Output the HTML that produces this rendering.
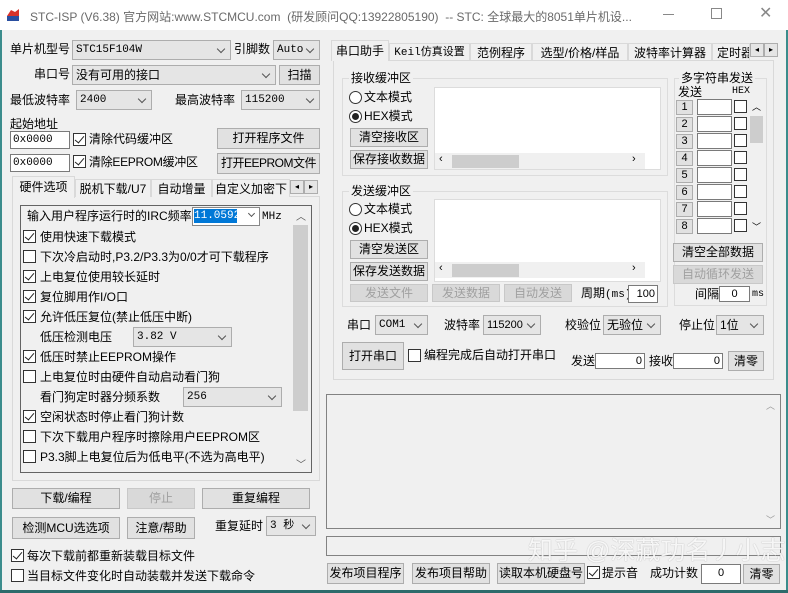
<!DOCTYPE html>
<html><head><meta charset="utf-8"><style>
*{box-sizing:border-box;margin:0;padding:0}
body{width:788px;height:593px;overflow:hidden;background:#f0f0f0;position:relative;font-family:"Liberation Sans","Noto Sans CJK SC",sans-serif;font-size:12px;color:#000}
.a{position:absolute;white-space:nowrap}
.t{position:absolute;white-space:nowrap;line-height:16px;font-size:12px}
.m{font-family:"Liberation Mono","Noto Sans CJK SC",monospace;font-size:11px}
.sel{position:absolute;background:#e5e5e5;border:1px solid #adadad;height:20px;line-height:18px;padding-left:3px;font-size:11px;font-family:"Liberation Mono","Noto Sans CJK SC",monospace}
.sel:after{content:"";position:absolute;right:6px;top:5px;width:5px;height:5px;border-right:1px solid #555;border-bottom:1px solid #555;transform:rotate(45deg)}
.btn{position:absolute;background:#e1e1e1;border:1px solid #adadad;text-align:center;font-size:12px;line-height:18px;white-space:nowrap}
.dis{color:#a0a0a0;background:#d9d9d9;border-color:#c8c8c8}
.inp{position:absolute;background:#fff;border:1px solid #7a7a7a;height:18px;line-height:16px;font-size:11px;padding:0 2px;font-family:"Liberation Mono",monospace}
.cb{position:absolute;width:13px;height:13px;border:1px solid #333;background:#fff}
.cb.on:after{content:"";position:absolute;left:3px;top:0px;width:4px;height:8px;border-right:1.5px solid #222;border-bottom:1.5px solid #222;transform:rotate(40deg)}
.rd{position:absolute;width:13px;height:13px;border:1px solid #333;border-radius:50%;background:#fff}
.rd.on:after{content:"";position:absolute;left:2px;top:2px;width:7px;height:7px;border-radius:50%;background:#222}
.grp{position:absolute;border:1px solid #dcdcdc}
.gt{position:absolute;background:#f0f0f0;padding:0 2px;top:-9px;left:6px;font-size:12px;line-height:16px}
.tab{position:absolute;border:1px solid #d9d9d9;border-bottom:none;background:#f0f0f0;text-align:center;font-size:12px;line-height:18px;white-space:nowrap;overflow:hidden}
.arr{position:absolute;width:14px;height:14px;background:#e5e5e5;border:1px solid #adadad;font-size:8px;line-height:12px;text-align:center}
</style></head><body>
<div class="a" style="left:0;top:0;width:788px;height:30px;background:#fff"></div>
<svg class="a" style="left:5px;top:7px" width="16" height="16"><rect x="2" y="9" width="12" height="5" fill="#2a4fa0"/><path d="M2 9 L6 3 L10 5 L14 2 L14 9Z" fill="#d8322a"/></svg>
<div class="a" style="left:30px;top:8px;font-size:12px;color:#6a6a6a">STC-ISP (V6.38) 官方网站:www.STCMCU.com &nbsp;(研发顾问QQ:13922805190) &nbsp;-- STC: 全球最大的8051单片机设...</div>
<div class="a" style="left:663px;top:14px;width:11px;height:1px;background:#888"></div>
<div class="a" style="left:711px;top:8px;width:11px;height:11px;border:1px solid #888"></div>
<div class="a" style="left:759px;top:3px;font-size:16px;color:#888">✕</div>
<div class="a" style="left:0;top:30px;width:2px;height:563px;background:#3b8c8c"></div>
<div class="a" style="left:786px;top:30px;width:2px;height:563px;background:#3b8c8c"></div>
<div class="a" style="left:0;top:590px;width:788px;height:3px;background:#2d6b6b"></div>

<div class="t" style="left:10px;top:41px">单片机型号</div>
<div class="sel" style="left:72px;top:40px;width:159px">STC15F104W</div>
<div class="t" style="left:234px;top:41px">引脚数</div>
<div class="sel" style="left:273px;top:40px;width:47px">Auto</div>
<div class="t" style="left:34px;top:66px">串口号</div>
<div class="sel" style="left:72px;top:65px;width:204px;font-family:'Liberation Sans','Noto Sans CJK SC',sans-serif;font-size:12px">没有可用的接口</div>
<div class="btn" style="left:279px;top:65px;width:41px;height:20px">扫描</div>
<div class="t" style="left:10px;top:92px">最低波特率</div>
<div class="sel" style="left:76px;top:90px;width:76px">2400</div>
<div class="t" style="left:175px;top:92px">最高波特率</div>
<div class="sel" style="left:241px;top:90px;width:79px">115200</div>
<div class="t" style="left:10px;top:116px">起始地址</div>
<div class="inp" style="left:10px;top:131px;width:60px">0x0000</div>
<div class="cb on" style="left:73px;top:133px"></div><div class="t" style="left:89px;top:131px">清除代码缓冲区</div>
<div class="btn" style="left:217px;top:128px;width:103px;height:21px">打开程序文件</div>
<div class="inp" style="left:10px;top:154px;width:60px">0x0000</div>
<div class="cb on" style="left:73px;top:155px"></div><div class="t" style="left:89px;top:154px;letter-spacing:-0.3px">清除EEPROM缓冲区</div>
<div class="btn" style="left:217px;top:153px;width:103px;height:21px;letter-spacing:-0.5px">打开EEPROM文件</div>

<div class="a" style="left:12px;top:196px;width:308px;height:285px;border:1px solid #d9d9d9;background:#f0f0f0"></div>
<div class="tab" style="left:75px;top:179px;width:76px;height:18px">脱机下载/U7</div>
<div class="tab" style="left:151px;top:179px;width:61px;height:18px">自动增量</div>
<div class="tab" style="left:212px;top:179px;width:78px;height:18px">自定义加密下</div>
<div class="tab" style="left:12px;top:176px;width:63px;height:22px;line-height:20px">硬件选项</div>
<div class="arr" style="left:290px;top:180px">◂</div><div class="arr" style="left:304px;top:180px">▸</div>
<div class="a" style="left:20px;top:205px;width:292px;height:268px;border:1px solid #646464"></div>
<div class="a" style="left:293px;top:225px;width:15px;height:186px;background:#cdcdcd"></div>
<div class="a" style="left:296px;top:208px;font-size:10px;color:#555">︿</div>
<div class="a" style="left:296px;top:456px;font-size:10px;color:#555">﹀</div>
<div class="t" style="left:27px;top:208px">输入用户程序运行时的IRC频率</div>
<div class="a" style="left:192px;top:207px;width:68px;height:19px;border:1px solid #888;background:#fff"></div>
<div class="a" style="left:194px;top:209px;width:43px;height:14px;background:#0078d7;color:#fff;font-family:'Liberation Mono',monospace;font-size:11px;line-height:14px">11.0592</div>
<div class="a" style="left:249px;top:211px;width:5px;height:5px;border-right:1px solid #555;border-bottom:1px solid #555;transform:rotate(45deg)"></div>
<div class="t m" style="left:262px;top:209px">MHz</div>
<div class="cb on" style="left:23px;top:230px"></div><div class="t" style="left:40px;top:229px">使用快速下载模式</div>
<div class="cb" style="left:23px;top:250px"></div><div class="t" style="left:40px;top:249px">下次冷启动时,P3.2/P3.3为0/0才可下载程序</div>
<div class="cb on" style="left:23px;top:270px"></div><div class="t" style="left:40px;top:269px">上电复位使用较长延时</div>
<div class="cb on" style="left:23px;top:290px"></div><div class="t" style="left:40px;top:289px">复位脚用作I/O口</div>
<div class="cb on" style="left:23px;top:310px"></div><div class="t" style="left:40px;top:309px">允许低压复位(禁止低压中断)</div>
<div class="t" style="left:40px;top:329px">低压检测电压</div>
<div class="sel" style="left:133px;top:327px;width:99px">3.82 V</div>
<div class="cb on" style="left:23px;top:350px"></div><div class="t" style="left:40px;top:349px">低压时禁止EEPROM操作</div>
<div class="cb" style="left:23px;top:370px"></div><div class="t" style="left:40px;top:369px">上电复位时由硬件自动启动看门狗</div>
<div class="t" style="left:40px;top:389px">看门狗定时器分频系数</div>
<div class="sel" style="left:183px;top:387px;width:99px">256</div>
<div class="cb on" style="left:23px;top:410px"></div><div class="t" style="left:40px;top:409px">空闲状态时停止看门狗计数</div>
<div class="cb" style="left:23px;top:430px"></div><div class="t" style="left:40px;top:429px">下次下载用户程序时擦除用户EEPROM区</div>
<div class="cb" style="left:23px;top:450px"></div><div class="t" style="left:40px;top:449px">P3.3脚上电复位后为低电平(不选为高电平)</div>

<div class="btn" style="left:12px;top:488px;width:108px;height:21px">下载/编程</div>
<div class="btn dis" style="left:127px;top:488px;width:68px;height:21px">停止</div>
<div class="btn" style="left:202px;top:488px;width:108px;height:21px">重复编程</div>
<div class="btn" style="left:12px;top:517px;width:108px;height:22px;line-height:20px">检测MCU选选项</div>
<div class="btn" style="left:127px;top:517px;width:68px;height:22px;line-height:20px">注意/帮助</div>
<div class="t" style="left:215px;top:518px">重复延时</div>
<div class="sel" style="left:266px;top:516px;width:50px">3 秒</div>
<div class="cb on" style="left:11px;top:549px"></div><div class="t" style="left:27px;top:548px">每次下载前都重新装载目标文件</div>
<div class="cb" style="left:11px;top:569px"></div><div class="t" style="left:27px;top:568px">当目标文件变化时自动装载并发送下载命令</div>

<div class="a" style="left:333px;top:60px;width:441px;height:320px;border:1px solid #d9d9d9"></div>
<div class="tab" style="left:389px;top:43px;width:81px;height:17px;font-family:'Liberation Mono','Noto Sans CJK SC',monospace;font-size:11px">Keil仿真设置</div>
<div class="tab" style="left:470px;top:43px;width:62px;height:17px">范例程序</div>
<div class="tab" style="left:532px;top:43px;width:96px;height:17px">选型/价格/样品</div>
<div class="tab" style="left:628px;top:43px;width:84px;height:17px">波特率计算器</div>
<div class="tab" style="left:712px;top:43px;width:38px;height:17px;text-align:left;padding-left:4px">定时器</div>
<div class="tab" style="left:331px;top:40px;width:58px;height:21px;line-height:20px;border-color:#d9d9d9">串口助手</div>
<div class="arr" style="left:750px;top:43px">◂</div><div class="arr" style="left:764px;top:43px">▸</div>

<div class="grp" style="left:342px;top:78px;width:326px;height:98px"><span class="gt">接收缓冲区</span></div>
<div class="rd" style="left:349px;top:91px"></div><div class="t" style="left:364px;top:89px">文本模式</div>
<div class="rd on" style="left:349px;top:110px"></div><div class="t" style="left:364px;top:108px">HEX模式</div>
<div class="btn" style="left:350px;top:128px;width:78px;height:19px;line-height:17px">清空接收区</div>
<div class="btn" style="left:350px;top:150px;width:78px;height:19px;line-height:17px">保存接收数据</div>
<div class="a" style="left:434px;top:87px;width:227px;height:83px;background:#fff;border:1px solid #dcdcdc"></div>
<div class="a" style="left:435px;top:153px;width:210px;height:16px;background:#f0f0f0"></div>
<div class="a" style="left:452px;top:155px;width:67px;height:13px;background:#cdcdcd"></div>
<div class="a" style="left:439px;top:153px;font-size:11px">‹</div><div class="a" style="left:632px;top:153px;font-size:11px">›</div>

<div class="grp" style="left:342px;top:191px;width:326px;height:116px"><span class="gt">发送缓冲区</span></div>
<div class="rd" style="left:349px;top:203px"></div><div class="t" style="left:364px;top:201px">文本模式</div>
<div class="rd on" style="left:349px;top:222px"></div><div class="t" style="left:364px;top:220px">HEX模式</div>
<div class="btn" style="left:350px;top:240px;width:78px;height:19px;line-height:17px">清空发送区</div>
<div class="btn" style="left:350px;top:262px;width:78px;height:19px;line-height:17px">保存发送数据</div>
<div class="a" style="left:434px;top:199px;width:227px;height:83px;background:#fff;border:1px solid #dcdcdc"></div>
<div class="a" style="left:435px;top:262px;width:210px;height:16px;background:#f0f0f0"></div>
<div class="a" style="left:452px;top:264px;width:67px;height:13px;background:#cdcdcd"></div>
<div class="a" style="left:439px;top:262px;font-size:11px">‹</div><div class="a" style="left:632px;top:262px;font-size:11px">›</div>
<div class="btn dis" style="left:350px;top:284px;width:78px;height:18px;line-height:16px">发送文件</div>
<div class="btn dis" style="left:432px;top:284px;width:68px;height:18px;line-height:16px">发送数据</div>
<div class="btn dis" style="left:504px;top:284px;width:68px;height:18px;line-height:16px">自动发送</div>
<div class="t" style="left:581px;top:285px">周期<span class="m">(ms)</span></div>
<div class="inp" style="left:628px;top:285px;width:30px;text-align:right;font-family:'Liberation Sans',sans-serif">100</div>

<div class="grp" style="left:674px;top:78px;width:93px;height:228px"><span class="gt" style="left:4px">多字符串发送</span></div>
<div class="t" style="left:678px;top:84px">发送</div><div class="t m" style="left:732px;top:84px;font-size:10px">HEX</div>
<div class="a" style="left:750px;top:116px;width:13px;height:27px;background:#cdcdcd"></div>
<div class="a" style="left:752px;top:100px;font-size:9px">︿</div><div class="a" style="left:752px;top:220px;font-size:9px">﹀</div>
<div class="btn" style="left:676px;top:100px;width:17px;height:15px;line-height:13px;font-size:11px">1</div><div class="inp" style="left:697px;top:99px;width:35px;height:16px"></div><div class="cb" style="left:734px;top:100px"></div>
<div class="btn" style="left:676px;top:117px;width:17px;height:15px;line-height:13px;font-size:11px">2</div><div class="inp" style="left:697px;top:116px;width:35px;height:16px"></div><div class="cb" style="left:734px;top:117px"></div>
<div class="btn" style="left:676px;top:134px;width:17px;height:15px;line-height:13px;font-size:11px">3</div><div class="inp" style="left:697px;top:133px;width:35px;height:16px"></div><div class="cb" style="left:734px;top:134px"></div>
<div class="btn" style="left:676px;top:151px;width:17px;height:15px;line-height:13px;font-size:11px">4</div><div class="inp" style="left:697px;top:150px;width:35px;height:16px"></div><div class="cb" style="left:734px;top:151px"></div>
<div class="btn" style="left:676px;top:168px;width:17px;height:15px;line-height:13px;font-size:11px">5</div><div class="inp" style="left:697px;top:167px;width:35px;height:16px"></div><div class="cb" style="left:734px;top:168px"></div>
<div class="btn" style="left:676px;top:185px;width:17px;height:15px;line-height:13px;font-size:11px">6</div><div class="inp" style="left:697px;top:184px;width:35px;height:16px"></div><div class="cb" style="left:734px;top:185px"></div>
<div class="btn" style="left:676px;top:202px;width:17px;height:15px;line-height:13px;font-size:11px">7</div><div class="inp" style="left:697px;top:201px;width:35px;height:16px"></div><div class="cb" style="left:734px;top:202px"></div>
<div class="btn" style="left:676px;top:219px;width:17px;height:15px;line-height:13px;font-size:11px">8</div><div class="inp" style="left:697px;top:218px;width:35px;height:16px"></div><div class="cb" style="left:734px;top:219px"></div>
<div class="btn" style="left:673px;top:243px;width:90px;height:19px;line-height:17px">清空全部数据</div>
<div class="btn dis" style="left:673px;top:265px;width:90px;height:19px;line-height:17px">自动循环发送</div>
<div class="t" style="left:695px;top:286px">间隔</div>
<div class="inp" style="left:719px;top:286px;width:31px;height:16px;line-height:14px;text-align:center;font-family:'Liberation Sans',sans-serif">0</div>
<div class="t m" style="left:752px;top:287px;font-size:10px">ms</div>

<div class="t" style="left:347px;top:317px">串口</div>
<div class="sel" style="left:375px;top:315px;width:53px">COM1</div>
<div class="t" style="left:444px;top:317px">波特率</div>
<div class="sel" style="left:483px;top:315px;width:58px;font-family:'Liberation Sans',sans-serif">115200</div>
<div class="t" style="left:565px;top:317px">校验位</div>
<div class="sel" style="left:603px;top:315px;width:58px;font-family:'Liberation Sans','Noto Sans CJK SC',sans-serif;font-size:12px">无验位</div>
<div class="t" style="left:679px;top:317px">停止位</div>
<div class="sel" style="left:716px;top:315px;width:48px;font-family:'Liberation Sans','Noto Sans CJK SC',sans-serif;font-size:12px">1位</div>
<div class="btn" style="left:342px;top:342px;width:62px;height:28px;line-height:26px">打开串口</div>
<div class="cb" style="left:408px;top:349px"></div><div class="t" style="left:424px;top:347px">编程完成后自动打开串口</div>
<div class="t" style="left:571px;top:353px">发送</div>
<div class="inp" style="left:595px;top:353px;width:50px;height:16px;line-height:14px;text-align:right;font-family:'Liberation Sans',sans-serif">0</div>
<div class="t" style="left:649px;top:353px">接收</div>
<div class="inp" style="left:673px;top:353px;width:50px;height:16px;line-height:14px;text-align:right;font-family:'Liberation Sans',sans-serif">0</div>
<div class="btn" style="left:728px;top:351px;width:36px;height:20px">清零</div>

<div class="a" style="left:326px;top:394px;width:455px;height:135px;border:1px solid #828282"></div>
<div class="a" style="left:766px;top:399px;font-size:9px;color:#999">︿</div>
<div class="a" style="left:766px;top:513px;font-size:9px;color:#999">﹀</div>
<div class="a" style="left:326px;top:536px;width:455px;height:20px;border:1px solid #828282"></div>
<div class="btn" style="left:327px;top:563px;width:77px;height:21px">发布项目程序</div>
<div class="btn" style="left:412px;top:563px;width:78px;height:21px">发布项目帮助</div>
<div class="btn" style="left:497px;top:563px;width:88px;height:21px">读取本机硬盘号</div>
<div class="cb on" style="left:587px;top:566px"></div><div class="t" style="left:602px;top:565px">提示音</div>
<div class="t" style="left:650px;top:565px">成功计数</div>
<div class="inp" style="left:701px;top:564px;width:40px;height:20px;text-align:center;font-family:'Liberation Sans',sans-serif">0</div>
<div class="btn" style="left:743px;top:564px;width:37px;height:20px">清零</div>
<div class="a" style="left:528px;top:531px;font-size:25px;color:rgba(255,255,255,0.9);text-shadow:0 0 1px rgba(0,0,0,0.35)">知乎 @深藏功名丿小志</div>
</body></html>
